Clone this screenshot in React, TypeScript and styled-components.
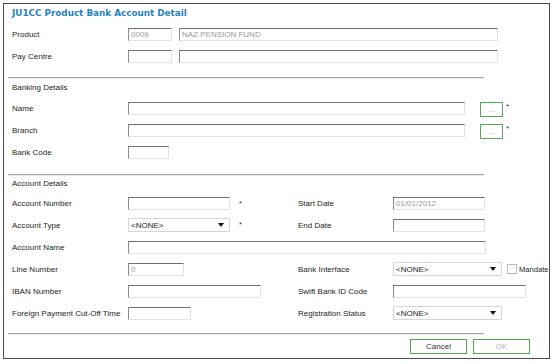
import React from "react";
import styled, { createGlobalStyle } from "styled-components";

const GlobalStyle = createGlobalStyle`
  html, body {
    margin: 0;
    padding: 0;
    background: #ffffff;
  }
  body {
    font-family: "Liberation Sans", Arial, sans-serif;
    color: #1e1e1e;
  }
`;

const Frame = styled.div`
  margin: 3px 0 0 3px;
  width: 547px;
  height: 356px;
  box-sizing: border-box;
  border: 1px solid #4a4a4a;
  padding: 0 19px 0 8px;
  display: flex;
  flex-direction: column;
`;

const Title = styled.h1`
  margin: 0;
  height: 19px;
  line-height: 19px;
  font-family: "DejaVu Sans", Verdana, sans-serif;
  font-size: 8.8px;
  font-weight: bold;
  color: #1f82c4;
`;

const Row = styled.div`
  display: grid;
  grid-template-columns: 116px 170px 95px auto;
  align-items: center;
  height: 22px;
`;

const Label = styled.span`
  font-size: 8px;
  color: #1e1e1e;
  white-space: nowrap;
`;

const Heading = styled.div<{ $h: number }>`
  height: ${(p) => p.$h}px;
  line-height: ${(p) => p.$h}px;
  font-size: 8px;
  color: #1e1e1e;
`;

const Fields = styled.div<{ $span?: boolean }>`
  display: flex;
  align-items: center;
  grid-column: ${(p) => (p.$span ? "2 / 5" : "auto")};
`;

const Input = styled.input<{ $w: number; $gap?: number }>`
  width: ${(p) => p.$w}px;
  height: 13px;
  margin: 0 0 0 ${(p) => p.$gap ?? 0}px;
  box-sizing: border-box;
  padding: 0 2px;
  border-style: solid;
  border-width: 1px;
  border-color: #6f6f6f #e3e3e3 #e3e3e3 #8c8c8c;
  background: #fff;
  font-family: "Liberation Sans", Arial, sans-serif;
  font-size: 8px;
  color: #9a9a9a;
  outline: none;
`;

const Select = styled.div<{ $w: number }>`
  width: ${(p) => p.$w}px;
  height: 14px;
  box-sizing: border-box;
  border: 1px solid #d6d6d6;
  padding: 0 5px 0 2px;
  display: flex;
  align-items: center;
  justify-content: space-between;
  font-size: 8px;
  color: #1e1e1e;
  background: #fff;
`;

const Star = styled.span<{ $gap: number }>`
  margin-left: ${(p) => p.$gap}px;
  align-self: flex-start;
  margin-top: 3px;
  font-size: 8px;
  line-height: 8px;
  color: #333;
`;

const LookupButton = styled.button`
  width: 23px;
  height: 15px;
  margin: 2px 0 0 15px;
  padding: 0;
  box-sizing: border-box;
  border: 1px solid #56a956;
  background: #fff;
  color: #a8a8a8;
  font-family: "Liberation Sans", Arial, sans-serif;
  font-size: 7px;
  line-height: 13px;
`;

const Checkbox = styled.span`
  width: 10px;
  height: 10px;
  margin-left: 5px;
  box-sizing: border-box;
  border: 1px solid #bdbdbd;
  background: #fbfbfb;
`;

const CheckLabel = styled.span`
  margin-left: 2px;
  font-size: 7.6px;
  color: #1e1e1e;
  white-space: nowrap;
`;

const Separator = styled.div<{ $top: number }>`
  margin: ${(p) => p.$top}px 0 0 -4px;
  width: 476px;
  border-top: 1px solid #a9a9a9;
  border-bottom: 1px solid #e8e8e8;
`;

const ButtonBar = styled.div`
  display: flex;
  justify-content: flex-end;
  gap: 6px;
  margin-top: 4px;
`;

const ActionButton = styled.button<{ $disabled?: boolean }>`
  width: 57px;
  height: 15px;
  padding: 0;
  box-sizing: border-box;
  border: 1px solid #4fa84f;
  background: #fff;
  font-family: "Liberation Sans", Arial, sans-serif;
  font-size: 8px;
  color: ${(p) => (p.$disabled ? "#b4b4b4" : "#333")};
`;

const Arrow = () => (
  <svg width="6" height="4" viewBox="0 0 6 4">
    <polygon points="0,0 6,0 3,4" fill="#111" />
  </svg>
);

const App: React.FC = () => {
  return (
    <>
      <GlobalStyle />
      <Frame>
        <Title>JU1CC Product Bank Account Detail</Title>

        <Row>
          <Label>Product</Label>
          <Fields $span>
            <Input $w={44} readOnly defaultValue="0009" />
            <Input $w={319} $gap={7} readOnly defaultValue="NAZ PENSION FUND" />
          </Fields>
        </Row>
        <Row>
          <Label>Pay Centre</Label>
          <Fields $span>
            <Input $w={44} readOnly />
            <Input $w={319} $gap={7} readOnly />
          </Fields>
        </Row>

        <Separator $top={10} />
        <Heading $h={18}>Banking Details</Heading>

        <Row>
          <Label>Name</Label>
          <Fields $span>
            <Input $w={337} readOnly />
            <LookupButton>...</LookupButton>
            <Star $gap={3}>*</Star>
          </Fields>
        </Row>
        <Row>
          <Label>Branch</Label>
          <Fields $span>
            <Input $w={337} readOnly />
            <LookupButton>...</LookupButton>
            <Star $gap={3}>*</Star>
          </Fields>
        </Row>
        <Row>
          <Label>Bank Code</Label>
          <Fields>
            <Input $w={41} readOnly />
          </Fields>
        </Row>

        <Separator $top={11} />
        <Heading $h={16}>Account Details</Heading>

        <Row>
          <Label>Account Number</Label>
          <Fields>
            <Input $w={102} readOnly />
            <Star $gap={9}>*</Star>
          </Fields>
          <Label>Start Date</Label>
          <Fields>
            <Input $w={92} readOnly defaultValue="01/01/2012" />
          </Fields>
        </Row>
        <Row>
          <Label>Account Type</Label>
          <Fields>
            <Select $w={102}>
              &lt;NONE&gt;
              <Arrow />
            </Select>
            <Star $gap={9}>*</Star>
          </Fields>
          <Label>End Date</Label>
          <Fields>
            <Input $w={92} readOnly />
          </Fields>
        </Row>
        <Row>
          <Label>Account Name</Label>
          <Fields $span>
            <Input $w={358} readOnly />
          </Fields>
        </Row>
        <Row>
          <Label>Line Number</Label>
          <Fields>
            <Input $w={56} readOnly defaultValue="0" />
          </Fields>
          <Label>Bank Interface</Label>
          <Fields>
            <Select $w={109}>
              &lt;NONE&gt;
              <Arrow />
            </Select>
            <Checkbox />
            <CheckLabel>Mandate</CheckLabel>
          </Fields>
        </Row>
        <Row>
          <Label>IBAN Number</Label>
          <Fields>
            <Input $w={133} readOnly />
          </Fields>
          <Label>Swift Bank ID Code</Label>
          <Fields>
            <Input $w={133} readOnly />
          </Fields>
        </Row>
        <Row>
          <Label>Foreign Payment Cut-Off Time</Label>
          <Fields>
            <Input $w={63} readOnly />
          </Fields>
          <Label>Registration Status</Label>
          <Fields>
            <Select $w={109}>
              &lt;NONE&gt;
              <Arrow />
            </Select>
          </Fields>
        </Row>

        <Separator $top={9} />
        <ButtonBar>
          <ActionButton>Cancel</ActionButton>
          <ActionButton $disabled>OK</ActionButton>
        </ButtonBar>
      </Frame>
    </>
  );
};

export default App;
